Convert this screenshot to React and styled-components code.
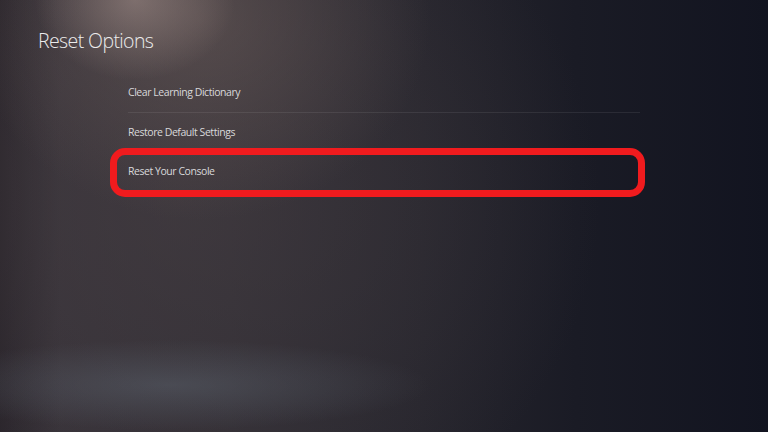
import React from "react";
import styled, { createGlobalStyle } from "styled-components";

const Global = createGlobalStyle`
  html, body { margin: 0; padding: 0; background: #15161f; }
  * { box-sizing: border-box; }
`;

const Screen = styled.div`
  width: 768px;
  height: 432px;
  overflow: hidden;
  position: relative;
  font-family: "Open Sans", "Noto Sans", sans-serif;
  padding: 27px 0 0 38px;
  background:
    radial-gradient(ellipse 100px 80px at 135px 0px, rgba(165, 145, 140, 0.55), rgba(165, 145, 140, 0) 100%),
    radial-gradient(ellipse 230px 200px at 200px 20px, rgba(110, 95, 92, 0.55), rgba(110, 95, 92, 0) 100%),
    radial-gradient(ellipse 260px 45px at 170px 385px, rgba(100, 110, 122, 0.4), rgba(100, 110, 122, 0) 100%),
    radial-gradient(ellipse 420px 380px at 180px 200px, rgba(72, 64, 68, 0.55), rgba(72, 64, 68, 0) 100%),
    linear-gradient(to right, rgba(22, 18, 24, 0.5) 0px, rgba(22, 18, 24, 0) 60px),
    linear-gradient(to right, #38333a 0%, #312e35 30%, #26252d 55%, #1a1b25 75%, #121420 100%);
`;

const Title = styled.h1`
  margin: 0;
  font-size: 19.5px;
  line-height: 28px;
  font-weight: 300;
  letter-spacing: -0.6px;
  color: #ececec;
`;

const List = styled.ul`
  list-style: none;
  margin: 18px 0 0 90px;
  padding: 0;
  width: 512px;
`;

const Row = styled.li`
  position: relative;
  height: ${(p) => (p.$divider ? 40 : 39)}px;
  line-height: 39px;
  font-size: 10.5px;
  font-weight: 400;
  letter-spacing: -0.45px;
  color: #d8d8da;
  border-bottom: ${(p) => (p.$divider ? "1px solid rgba(255,255,255,0.08)" : "none")};
`;

const Highlight = styled.span`
  position: absolute;
  left: -18px;
  right: -5px;
  top: -4px;
  bottom: -6px;
  border: 7px solid #f01b1e;
  border-radius: 15px;
  pointer-events: none;
`;

export default function App() {
  return (
    <>
      <Global />
      <Screen>
        <Title>Reset Options</Title>
        <List>
          <Row $divider>Clear Learning Dictionary</Row>
          <Row>Restore Default Settings</Row>
          <Row>
            Reset Your Console
            <Highlight />
          </Row>
        </List>
      </Screen>
    </>
  );
}
